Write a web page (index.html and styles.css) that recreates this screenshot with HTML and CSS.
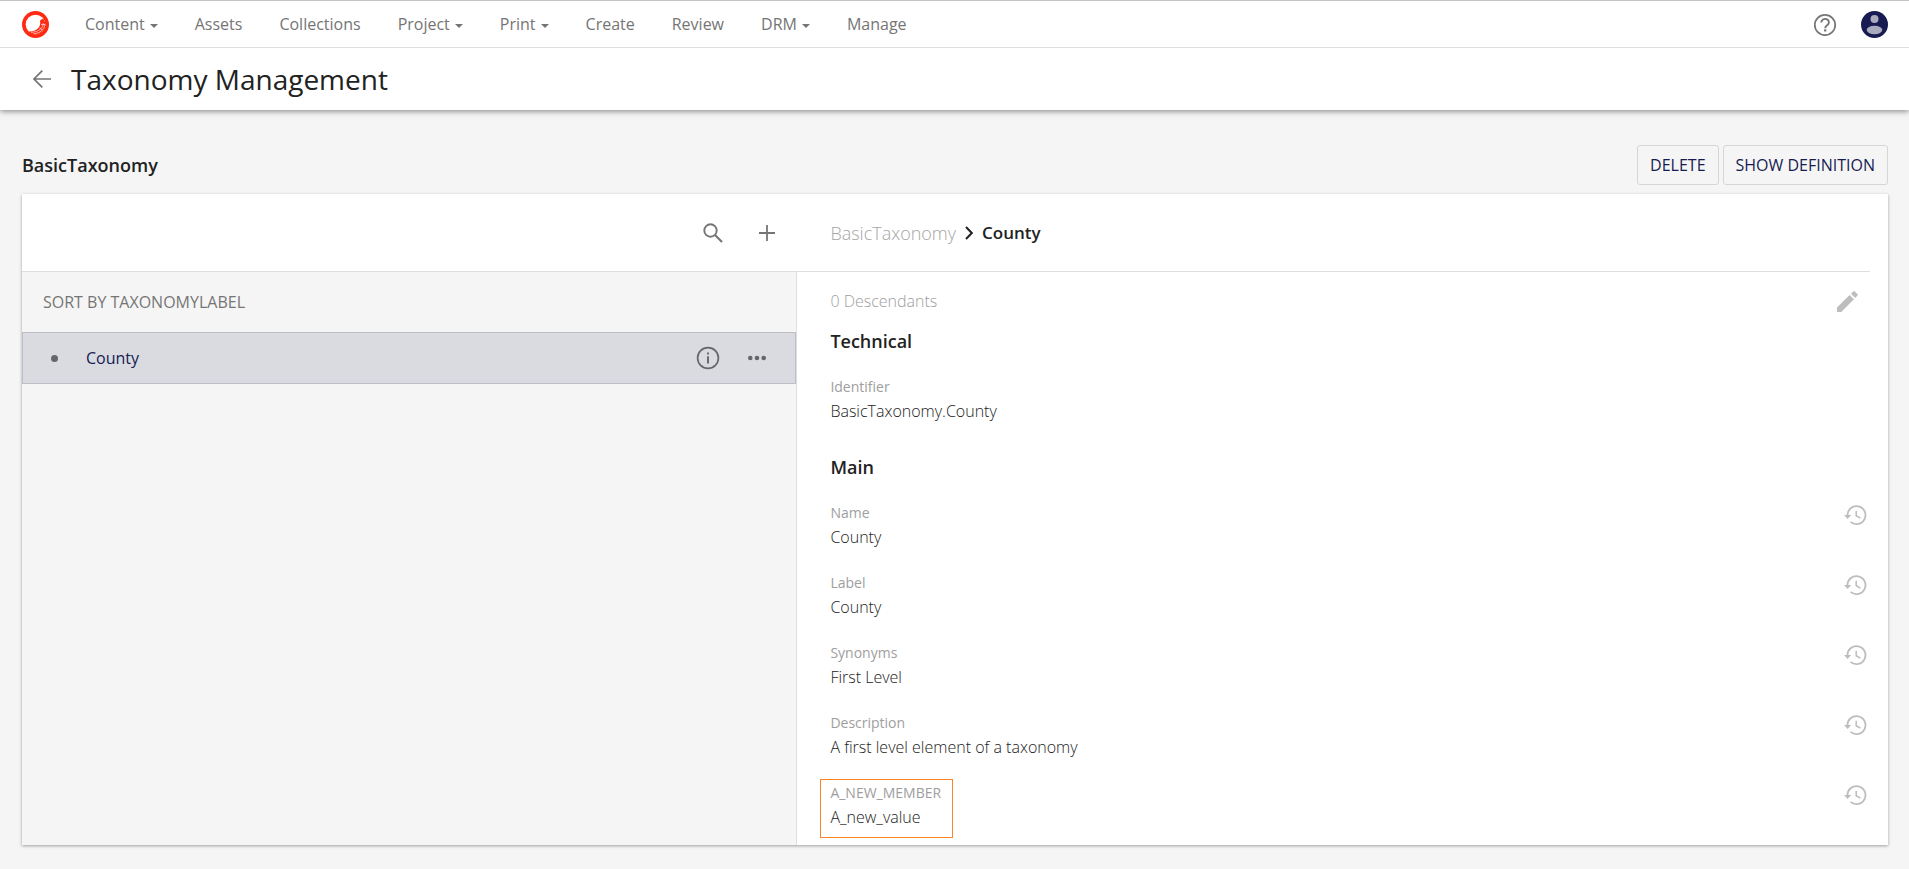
FILE: index.html
```html
<!DOCTYPE html>
<html lang="en">
<head>
<meta charset="utf-8">
<title>Taxonomy Management</title>
<link rel="stylesheet" href="styles.css">
</head>
<body>
<svg class="sprite" aria-hidden="true">
  <symbol id="history" viewBox="0 0 24 24"><path d="M4.500 12.600A9 9 0 1 1 7.600 18.900" fill="none" stroke="currentColor" stroke-width="1.800"/><path d="M1 12h7.200l-3.600 4z" fill="currentColor"/><path d="M13.200 7.700v5l4.200 2.500" fill="none" stroke="currentColor" stroke-width="1.500"/></symbol>
</svg>
<header class="topbar">
  <a class="logo" href="#" aria-label="Home">
    <svg width="27" height="27" viewBox="0 0 27 27"><circle cx="13.500" cy="13.500" r="13.500" fill="#ff2a13"/><circle cx="13.500" cy="13.500" r="9.800" fill="#fff"/><path d="M18 9.500l3-2c3.500 4 3 10-1 13.500-4 3.500-10.500 3.500-14-.5 8 .5 13.500-4 12-11z" fill="#ff2a13"/><path d="M21.300 12c0 4.500-4.300 9.300-12.300 9.300M23 13.500c-1 5.500-5.500 9-11.500 9.200M19 13.500h4M17.500 17l3 2" fill="none" stroke="#fff" stroke-width=".6"/></svg>
  </a>
  <nav class="nav">
    <a href="#">Content<span class="caret"></span></a>
    <a href="#">Assets</a>
    <a href="#">Collections</a>
    <a href="#">Project<span class="caret"></span></a>
    <a href="#">Print<span class="caret"></span></a>
    <a href="#">Create</a>
    <a href="#">Review</a>
    <a href="#">DRM<span class="caret"></span></a>
    <a href="#">Manage</a>
  </nav>
  <div class="account">
    <button class="icon-btn" aria-label="Help"><svg width="24" height="24" viewBox="0 0 24 24" fill="none" stroke="currentColor"><circle cx="12" cy="13" r="10.200" stroke-width="1.700"/><path d="M8.300 10.500a3.800 3.400 0 1 1 6.200 2.400c-1.300 1-2.300 1.500-2.300 3.300" stroke-width="1.900"/><path d="M12.200 17.300v2.200" stroke-width="2.200"/></svg></button>
    <button class="icon-btn" aria-label="Account"><svg width="27" height="27" viewBox="0 0 27 27"><circle cx="13.500" cy="13.500" r="13.500" fill="#171b52"/><circle cx="13.500" cy="8" r="4" fill="#a8aabd"/><ellipse cx="13.500" cy="19" rx="7.800" ry="4.200" fill="#a8aabd"/></svg></button>
  </div>
</header>
<div class="titlebar">
  <button class="icon-btn" aria-label="Back"><svg width="18" height="18" viewBox="0 0 18 18" fill="none" stroke="currentColor" stroke-width="1.700"><path d="M18 9H1M9.300 .7L1 9l8.300 8.300"/></svg></button>
  <h1>Taxonomy Management</h1>
</div>
<main class="page">
  <div class="heading">
    <h2>BasicTaxonomy</h2>
    <div class="actions">
      <button class="btn">DELETE</button>
      <button class="btn">SHOW DEFINITION</button>
    </div>
  </div>
  <div class="panel">
    <section class="tree">
      <div class="tree-tools">
        <button class="icon-btn" aria-label="Search"><svg width="20" height="20" viewBox="0 0 20 20" fill="none" stroke="currentColor"><circle cx="7.500" cy="7.500" r="6.200" stroke-width="1.900"/><path d="M12 12l7 7" stroke-width="2.100"/></svg></button>
        <button class="icon-btn" aria-label="Add"><svg width="16" height="16" viewBox="0 0 16 16" stroke="currentColor" stroke-width="1.800"><path d="M8 0v16M0 8h16"/></svg></button>
      </div>
      <div class="sort">SORT BY TAXONOMYLABEL</div>
      <div class="node">
        <span class="bullet"></span>
        <a href="#">County</a>
        <button class="icon-btn" aria-label="Information"><svg width="24" height="24" viewBox="0 0 24 24" fill="none" stroke="currentColor"><circle cx="12" cy="12" r="10.400" stroke-width="1.700"/><path d="M12 6.500v2M12 10.200v7.300" stroke-width="1.900"/></svg></button>
        <button class="icon-btn" aria-label="More"><svg width="18" height="6" viewBox="0 0 18 6" fill="currentColor"><circle cx="2.300" cy="3" r="2.300"/><circle cx="9" cy="3" r="2.300"/><circle cx="15.700" cy="3" r="2.300"/></svg></button>
      </div>
    </section>
    <section class="detail">
      <nav class="crumbs" aria-label="Breadcrumb">
        <a href="#">BasicTaxonomy</a>
        <svg width="8" height="14" viewBox="0 0 8 14" fill="none" stroke="currentColor" stroke-width="2"><path d="M1 1L6.800 7 1 13"/></svg>
        <span>County</span>
      </nav>
      <div class="content">
        <div class="summary">
          <span>0 Descendants</span>
          <button class="icon-btn faint" aria-label="Edit"><svg width="21" height="21" viewBox="0 0 21 21" fill="currentColor"><path d="M0 16.600L12.600 4l4.300 4.300L4.300 20.900H0zM14 2.700L16.100.6q.9-.8 1.800 0l2.400 2.400q.8.900 0 1.800L18.200 6.900z"/></svg></button>
        </div>
        <h3>Technical</h3>
        <dl class="fields">
          <div class="field"><div><dt>Identifier</dt><dd>BasicTaxonomy.County</dd></div></div>
        </dl>
        <h3>Main</h3>
        <dl class="fields">
          <div class="field"><div><dt>Name</dt><dd>County</dd></div><button class="icon-btn faint" aria-label="Name history"><svg width="24" height="24"><use href="#history"/></svg></button></div>
          <div class="field"><div><dt>Label</dt><dd>County</dd></div><button class="icon-btn faint" aria-label="Label history"><svg width="24" height="24"><use href="#history"/></svg></button></div>
          <div class="field"><div><dt>Synonyms</dt><dd>First Level</dd></div><button class="icon-btn faint" aria-label="Synonyms history"><svg width="24" height="24"><use href="#history"/></svg></button></div>
          <div class="field"><div><dt>Description</dt><dd>A first level element of a taxonomy</dd></div><button class="icon-btn faint" aria-label="Description history"><svg width="24" height="24"><use href="#history"/></svg></button></div>
          <div class="field"><div class="marked"><dt>A_NEW_MEMBER</dt><dd>A_new_value</dd></div><button class="icon-btn faint" aria-label="A_NEW_MEMBER history"><svg width="24" height="24"><use href="#history"/></svg></button></div>
        </dl>
      </div>
    </section>
  </div>
</main>
</body>
</html>
```
FILE: styles.css
```css
* { box-sizing: border-box; }
body { margin: 0; background: #f5f5f5; color: #222; font: 400 16px/24px "Open Sans", "Noto Sans", sans-serif; }
h1, h2, h3, dl, dd { margin: 0; }
a { color: inherit; text-decoration: none; }
svg { display: block; }
.sprite { position: absolute; width: 0; height: 0; }
.icon-btn { display: block; padding: 0; border: 0; background: none; color: #757575; cursor: pointer; }
.faint { color: #bdbdbd; }

.topbar { position: relative; z-index: 1; display: flex; align-items: center; height: 48px; padding: 0 21px 0 22px; background: #fff; border-top: 1px solid #c4c4c4; border-bottom: 1px solid #dedede; }
.nav { display: flex; gap: 37px; margin-left: 36px; color: #757575; }
.nav a { display: flex; align-items: center; }
.caret { margin: 4px 0 0 5px; border: 4px solid transparent; border-top-color: currentColor; border-bottom: 0; }
.account { display: flex; align-items: center; gap: 24px; margin-left: auto; }

.titlebar { display: flex; align-items: center; gap: 20px; height: 62px; padding: 0 33px; background: #fff; box-shadow: 0 1px 6px rgba(0, 0, 0, .5); }
.titlebar h1 { font-size: 28px; font-weight: 500; line-height: 40px; }

.page { padding: 35px 21px 25px 22px; }
.heading { display: flex; align-items: center; justify-content: space-between; margin-bottom: 9px; }
.heading h2 { font-size: 18px; font-weight: 550; }
.actions { display: flex; gap: 4px; }
.btn { height: 40px; padding: 0 12px; border: 1px solid #d6d6d6; border-radius: 3px; background: transparent; color: #171b52; font: inherit; cursor: pointer; }

.panel { display: grid; grid-template-columns: 83fr 117fr; background: #fff; box-shadow: 0 1px 3px rgba(0, 0, 0, .35); }
.tree { background: #f5f5f5; }
.tree-tools { display: flex; align-items: center; justify-content: flex-end; gap: 36px; height: 78px; padding-right: 21px; background: #fff; border-bottom: 1px solid #dedede; }
.sort { display: flex; align-items: center; height: 60px; padding: 0 21px; color: #757575; }
.node { display: flex; align-items: center; height: 52px; padding: 0 29px 0 28px; border: 1px solid #bdbec6; background: #dadbe1; color: #171b52; }
.node a { margin: 0 auto 0 28px; }
.node .icon-btn { margin-left: 28px; color: #65666a; }
.bullet { width: 7px; height: 7px; border-radius: 50%; background: #65666a; }

.crumbs { display: flex; align-items: center; gap: 9px; height: 78px; margin-right: 18px; padding-left: 34px; border-bottom: 1px solid #dedede; font-size: 17px; font-weight: 600; }
.crumbs a { color: #a6a6a6; font-size: 18px; font-weight: 300; }
.content { padding: 17px 21px 14px 33px; border-left: 1px solid #dedede; }
.summary { display: flex; justify-content: space-between; align-items: center; padding-right: 9px; color: #9e9e9e; font-weight: 300; }
.content h3 { margin-top: 16px; font-size: 18px; font-weight: 550; }
.content .fields + h3 { margin-top: 30px; }
.fields { display: grid; gap: 22px; padding-top: 24px; }
.field { display: flex; align-items: flex-start; justify-content: space-between; }
.field dt { color: #9e9e9e; font-size: 14px; line-height: 20px; }
.field dd { line-height: 28px; font-weight: 350; }
.marked { position: relative; }
.marked::after { content: ""; position: absolute; inset: -4px -12px -7px -10px; border: 1px solid #ff8427; }
```
